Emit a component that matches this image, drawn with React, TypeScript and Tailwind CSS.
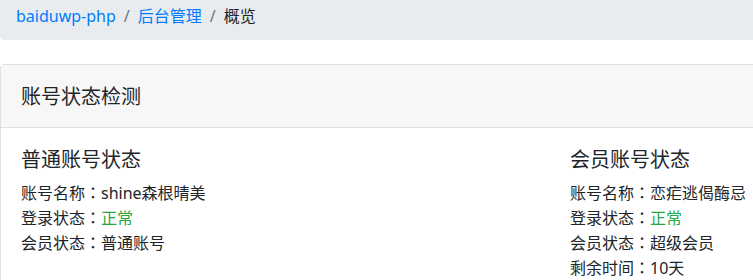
function C() {
  return <span style={{ fontFamily: '"Noto Sans CJK TC", sans-serif' }}>：</span>;
}

export default function App() {
  const font = { fontFamily: '"Noto Sans", "Noto Sans CJK SC", sans-serif' };
  return (
    <div className="w-[753px] h-[280px] overflow-hidden bg-white text-[#212529]" style={font}>
      <div className="w-[1110px]">
        <nav className="bg-[#e9ecef] rounded-b-[4px] px-4 pt-1 pb-3 text-[16px] leading-[24px] flex">
          <span className="text-[#007bff]">baiduwp-php</span>
          <span className="text-[#6c757d] px-2">/</span>
          <span className="text-[#007bff]">后台管理</span>
          <span className="text-[#6c757d] px-2">/</span>
          <span>概览</span>
        </nav>
        <div className="mt-6 border border-[#dfdfdf] rounded-[4px]">
          <div className="h-[63px] bg-[#f7f7f7] border-b border-[#dfdfdf] px-5 pt-[1px] flex items-center text-[20px] leading-[24px]">
            账号状态检测
          </div>
          <div className="px-5 pt-5 pb-5 flex text-[16px] leading-[24px]">
            <div className="w-[549px]">
              <div className="text-[20px] leading-[24px] mb-2">普通账号状态</div>
              <div>账号名称<C />shine森根晴美</div>
              <div>登录状态<C /><span className="text-[#28a745]">正常</span></div>
              <div>会员状态<C />普通账号</div>
            </div>
            <div>
              <div className="text-[20px] leading-[24px] mb-2">会员账号状态</div>
              <div>账号名称<C />恋疟逃偈酶忌</div>
              <div>登录状态<C /><span className="text-[#28a745]">正常</span></div>
              <div>会员状态<C />超级会员</div>
              <div>剩余时间<C />10天</div>
            </div>
          </div>
        </div>
      </div>
    </div>
  );
}
